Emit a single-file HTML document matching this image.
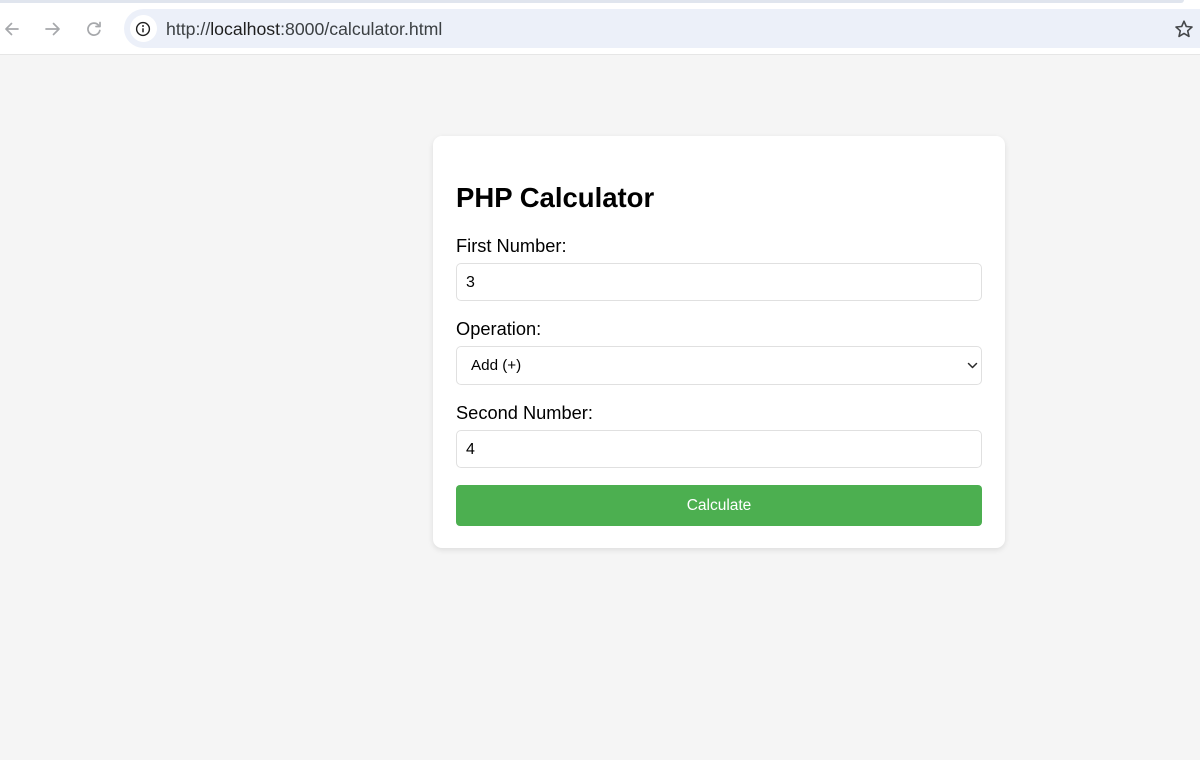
<!DOCTYPE html>
<html lang="en">
<head>
<meta charset="utf-8">
<title>PHP Calculator</title>
<style>
html,body{margin:0;padding:0;}
body{width:1200px;height:760px;overflow:hidden;position:relative;background:#f5f5f5;font-family:"Liberation Sans",Arial,sans-serif;color:#000;}
.abs{position:absolute;}
.bar{left:0;top:0;width:1200px;height:54px;background:#fff;border-bottom:1px solid #e6e6e6;}
.tabline{left:0;top:0;width:1184px;height:3px;background:#e0e5ee;border-radius:0 0 6px 0;}
.url{left:124px;top:9px;width:1076px;height:39px;background:#ecf0f9;border-radius:20px 0 0 20px;}
.urlc{left:130px;top:15px;width:27px;height:27px;background:#fff;border-radius:50%;}
.urltext{left:166px;top:20px;font-size:17.7px;line-height:18px;color:#3c4043;white-space:nowrap;}
.card{left:433px;top:136px;width:572px;height:412px;background:#fff;border-radius:9px;box-shadow:0 2px 6px rgba(0,0,0,.1);}
h1{position:absolute;margin:0;left:456px;top:182px;font-size:27.5px;line-height:32px;font-weight:700;white-space:nowrap;}
.lbl{position:absolute;left:456px;font-size:18.25px;line-height:20px;white-space:nowrap;}
.field{position:absolute;left:456px;width:524px;background:#fff;border:1px solid #e0e0e0;border-radius:5px;}
.val{position:absolute;font-size:16px;line-height:18px;white-space:nowrap;}
.btn{left:456px;top:485px;width:526px;height:41px;background:#4caf50;border-radius:4px;color:#fff;font-size:15.5px;line-height:41px;text-align:center;}
svg{position:absolute;overflow:visible;}
</style>
</head>
<body>
<div class="abs bar"></div>
<div class="abs tabline"></div>
<svg style="left:0;top:0" width="120" height="54" fill="none" stroke-linecap="round" stroke-linejoin="round">
  <path d="M18 29H6M11.5 23.5 6 29l5.5 5.5" stroke="#a6a8ab" stroke-width="1.7"/>
  <path d="M46 29h13M53.5 23.5 59 29l-5.5 5.5" stroke="#a6a8ab" stroke-width="1.7"/>
  <path d="M99.8 30.5a6 6 0 1 1-1.4-5.4" stroke="#a6a8ab" stroke-width="1.7"/>
  <path d="M100 22.5v4h-4" stroke="#a6a8ab" stroke-width="1.7"/>
</svg>
<div class="abs url"></div>
<div class="abs urlc"></div>
<svg style="left:135px;top:21px" width="16" height="16" fill="none">
  <circle cx="8" cy="8" r="6.4" stroke="#1f1f1f" stroke-width="1.4"/>
  <path d="M8 7.3v4" stroke="#1f1f1f" stroke-width="1.5"/>
  <circle cx="8" cy="5" r=".95" fill="#1f1f1f"/>
</svg>
<div class="abs urltext">http://<span style="color:#1f1f1f">localhost</span>:8000/calculator.html</div>
<svg style="left:1174px;top:19px" width="20" height="20" fill="none">
  <path d="M10 2.2l2.3 5.3 5.7.5-4.3 3.8 1.3 5.6-5-3-5 3 1.3-5.6L2 8l5.7-.5z" stroke="#45474a" stroke-width="1.6" stroke-linejoin="round"/>
</svg>

<div class="abs card"></div>
<h1>PHP Calculator</h1>
<div class="lbl" style="top:236px">First Number:</div>
<div class="field" style="top:263px;height:36px"></div>
<div class="val" style="left:466px;top:274px">3</div>
<div class="lbl" style="top:319px">Operation:</div>
<div class="field" style="top:346px;height:37px"></div>
<div class="val" style="left:471px;top:357px;font-size:15.2px">Add (+)</div>
<svg style="left:967px;top:362px" width="12" height="8" fill="none">
  <path d="M1.5 1.5 5.5 5.5 9.5 1.5" stroke="#2a2a2a" stroke-width="1.5" stroke-linecap="round" stroke-linejoin="round"/>
</svg>
<div class="lbl" style="top:403px">Second Number:</div>
<div class="field" style="top:430px;height:36px"></div>
<div class="val" style="left:466px;top:441px">4</div>
<div class="abs btn">Calculate</div>
</body>
</html>
